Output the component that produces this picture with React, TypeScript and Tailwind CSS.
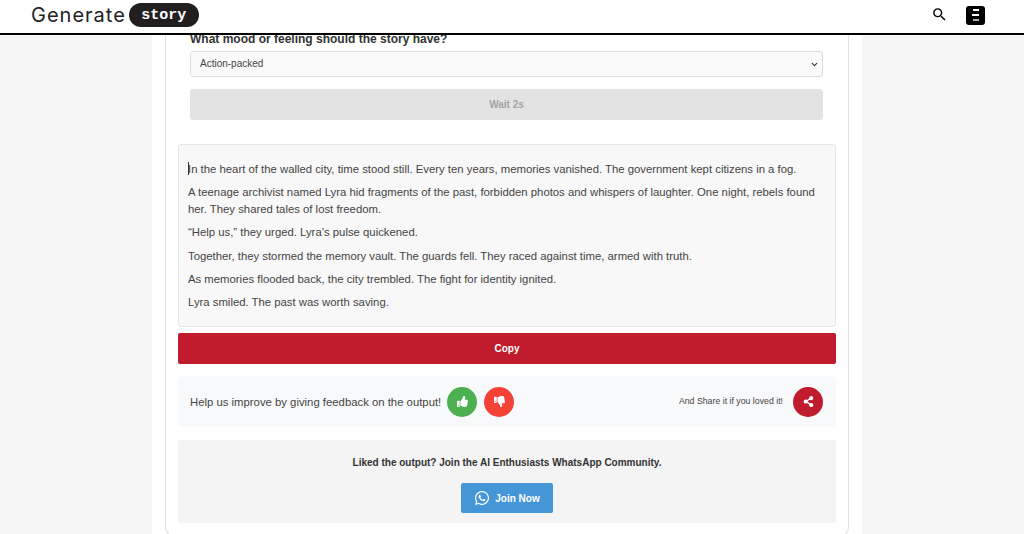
import { FaShareAlt, FaThumbsDown, FaThumbsUp, FaWhatsapp } from 'react-icons/fa';
import { LuChevronDown } from 'react-icons/lu';
import { MdSearch } from 'react-icons/md';

const paragraphs = [
  'A teenage archivist named Lyra hid fragments of the past, forbidden photos and whispers of laughter. One night, rebels found her. They shared tales of lost freedom.',
  '“Help us,” they urged. Lyra’s pulse quickened.',
  'Together, they stormed the memory vault. The guards fell. They raced against time, armed with truth.',
  'As memories flooded back, the city trembled. The fight for identity ignited.',
  'Lyra smiled. The past was worth saving.',
];

const Header = () => (
  <header className="relative z-10 flex h-[35px] shrink-0 items-center justify-between border-b-2 border-black bg-white pl-[31px] pr-[39px]">
    <div className="flex items-center gap-[3px] pb-[3px]">
      <span className="font-['Inter',sans-serif] text-[20px] leading-none tracking-[1px] text-[#222]">Generate</span>
      <span className="flex h-[24px] w-[70px] items-center justify-center rounded-full bg-[#231f20] font-['Liberation_Mono',monospace] text-[15px] font-bold leading-none text-white">
        story
      </span>
    </div>
    <div className="flex items-center gap-[18px] pb-[3px]">
      <MdSearch className="-mt-[2px] text-[17px] text-black" />
      <div className="flex h-[19px] w-[19px] flex-col items-center justify-center gap-[3px] rounded-[3px] bg-black">
        <span className="h-[2px] w-[6px] bg-white" />
        <span className="h-[2px] w-[7px] bg-white" />
        <span className="h-[2px] w-[6px] bg-[#aaa]" />
      </div>
    </div>
  </header>
);

const App = () => (
  <div className="flex h-[534px] w-[1024px] flex-col overflow-hidden bg-[#f6f6f6] font-['Liberation_Sans',Arial,sans-serif]">
    <Header />
    <main className="flex flex-1 justify-center pr-[10px]">
      <div className="w-[710px] bg-white pl-[13px] pr-[13px]">
        <div className="h-[506px] rounded-b-[10px] border border-t-0 border-[#e2e2e2] px-[12px]">
          <section className="pl-[12px] pr-[13px]">
            <p className="-mt-[4px] text-[12px] font-bold leading-[16px] text-[#333]">What mood or feeling should the story have?</p>
            <div className="relative mt-[4px]">
              <select className="block h-[26px] w-full appearance-none rounded-[3px] border border-[#ddd] bg-[#fafafa] pb-[1px] pl-[9px] text-[10px] text-[#444]">
                <option>Action-packed</option>
              </select>
              <LuChevronDown strokeWidth={3} className="absolute right-[4px] top-[9px] text-[9px] text-[#333]" />
            </div>
            <button className="mt-[12px] h-[31px] w-full rounded-[3px] bg-[#e3e3e3] text-[10px] font-bold text-[#a3a3a3]">Wait 2s</button>
          </section>

          <section className="mt-[24px] h-[183px] rounded-[3px] border border-[#e6e6e6] bg-[#f8f8f8] px-[9px] pt-[15px] text-[11.33px] leading-[17px] text-[#444]">
            <p className="mb-[6.2px]">
              <span className="-mr-px inline-block h-[13px] w-px translate-y-[2px] bg-[#333]" />
              In the heart of the walled city, time stood still. Every ten years, memories vanished. The government kept citizens in a fog.
            </p>
            {paragraphs.map((text) => (
              <p key={text} className="mb-[6.2px]">{text}</p>
            ))}
          </section>

          <button className="mt-[6px] h-[31px] w-full rounded-[2px] bg-[#c01c2e] text-[10px] font-bold text-white">Copy</button>

          <section className="mt-[12px] flex h-[51px] items-center justify-between rounded-[5px] bg-[#f8f9fb] pl-[12px] pr-[13px]">
            <div className="flex items-center">
              <span className="pt-[1px] text-[11.33px] text-[#444]">Help us improve by giving feedback on the output!</span>
              <button className="ml-[6px] flex h-[30px] w-[30px] items-center justify-center rounded-full bg-[#4caf50] text-[11px] text-white"><FaThumbsUp /></button>
              <button className="ml-[7px] flex h-[30px] w-[30px] items-center justify-center rounded-full bg-[#f44336] text-[11px] text-white"><FaThumbsDown /></button>
            </div>
            <div className="flex items-center">
              <span className="pt-[1px] text-[8.75px] text-[#444]">And Share it if you loved it!</span>
              <button className="ml-[10px] flex h-[30px] w-[30px] items-center justify-center rounded-full bg-[#c01c2e] text-[11px] text-white"><FaShareAlt /></button>
            </div>
          </section>

          <section className="mt-[13px] flex h-[83px] flex-col items-center rounded-[3px] bg-[#f4f4f4] pt-[15px]">
            <p className="text-[10px] font-bold leading-[16px] text-[#333]">Liked the output? Join the AI Enthusiasts WhatsApp Community.</p>
            <button className="mt-[12px] flex h-[30px] w-[92px] items-center justify-center gap-[5px] rounded-[2px] bg-[#4496d6] text-[10px] font-bold text-white">
              <FaWhatsapp className="text-[16px]" />
              Join Now
            </button>
          </section>
        </div>
      </div>
    </main>
  </div>
);

export default App;
